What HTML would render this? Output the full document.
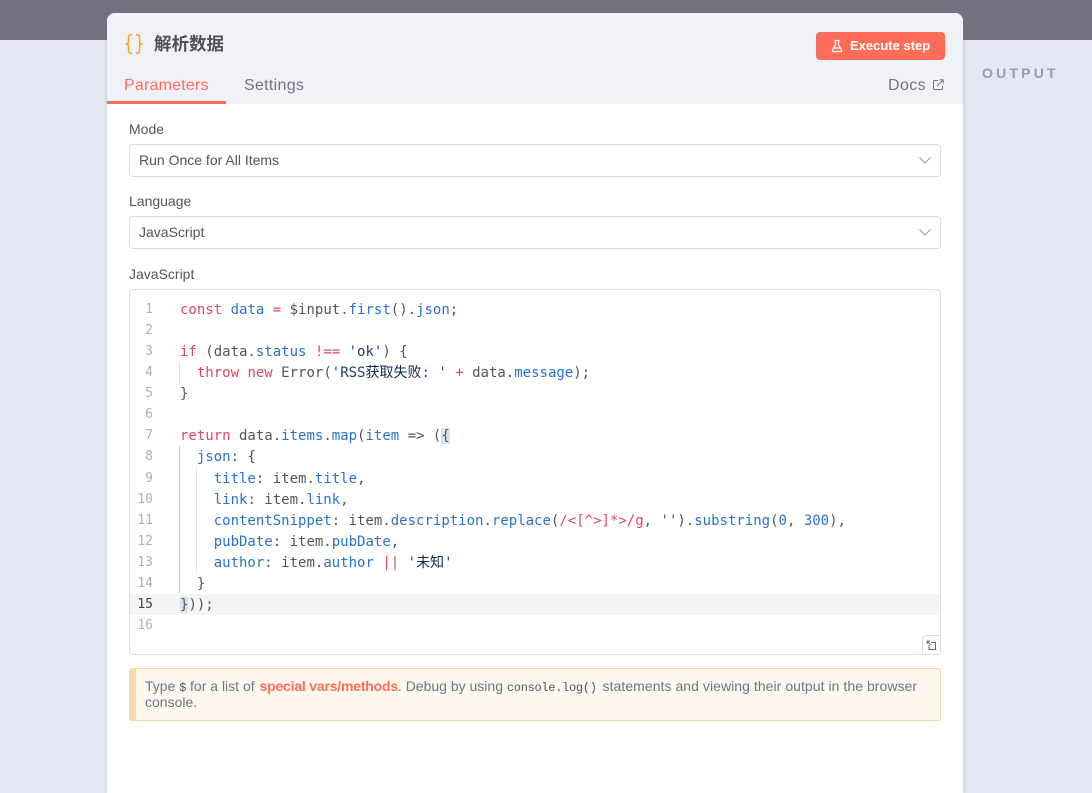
<!DOCTYPE html>
<html>
<head>
<meta charset="utf-8">
<style>
html,body{margin:0;padding:0;width:1092px;height:781px;overflow:hidden;background:#e5e8f2;font-family:"Liberation Sans","Noto Sans CJK SC",sans-serif;}
.a{position:absolute;white-space:nowrap;}
#top{left:0;top:0;width:1092px;height:40px;background:#73717e;}
#panel{left:107px;top:13px;width:856px;height:780px;background:#fff;border-radius:8px 8px 0 0;box-shadow:0 0 4px rgba(120,125,160,.4);overflow:hidden;}
#head{left:107px;top:13px;width:856px;height:91px;background:#f0f2f8;border-radius:8px 8px 0 0;}
.lbl{font-size:14px;color:#555;line-height:16px;}
.sel{left:129px;width:810px;height:31px;background:#fff;border:1px solid #d8dce8;border-radius:4px;}
.seltxt{left:139px;font-size:14px;color:#555;line-height:16px;}
#ed{left:129px;top:289px;width:810px;height:364px;background:#fff;border:1px solid #d8dce8;border-radius:4px;}
#act{left:130px;top:594px;width:810px;height:21px;background:#f5f5f5;}
.ln{left:130px;width:23px;margin-top:1px;text-align:right;font:13px/21px "DejaVu Sans Mono",monospace;color:#aeb1b6;}
.cd{left:180px;margin-top:1px;font:14px/21px "DejaVu Sans Mono","WenQuanYi Zen Hei",monospace;color:#555;white-space:pre;}
.k{color:#dc4a5f}.b{color:#2a72c8}.s{color:#1f3f6e}.cj{color:#0b2a52}
.hl{background:#d6e3f2}
.g{width:1px;background:#dfe2ea;}
#note{left:129px;top:668px;width:812px;height:53px;box-sizing:border-box;background:#fdf7ed;border:1px solid #f6d9a5;border-left:7px solid #f5d9a9;border-radius:3px;}
.nt{font-size:14px;line-height:16px;color:#6f7686;}
.mono{font:12px/16px "Liberation Mono",monospace;color:#555;letter-spacing:-.3px;}
</style>
</head>
<body>
<div class="a" id="top"></div>
<div class="a" style="left:982px;top:65px;font-size:14px;line-height:17px;font-weight:700;letter-spacing:3.2px;color:#9b9ca5;">OUTPUT</div>
<div class="a" id="panel"></div>
<div class="a" id="head"></div>

<svg class="a" style="left:124px;top:33px" width="21" height="22" viewBox="0 0 21 22" fill="none" stroke="#ff9d24" stroke-width="1.4"><path d="M8 1.5C5.5 1.5 4.5 2.5 4.5 4.5V8.5C4.5 10 3.5 11 1.5 11C3.5 11 4.5 12 4.5 13.5V17.5C4.5 19.5 5.5 20.5 8 20.5"/><path d="M12 1.5C14.5 1.5 15.5 2.5 15.5 4.5V8.5C15.5 10 16.5 11 18.5 11C16.5 11 15.5 12 15.5 13.5V17.5C15.5 19.5 14.5 20.5 12 20.5"/></svg>
<div class="a" style="left:154px;top:34px;font-size:17.5px;line-height:21px;font-weight:700;color:#505050;font-family:'Liberation Sans','Noto Sans CJK SC',sans-serif;">解析数据</div>

<div class="a" style="left:816px;top:32px;width:129px;height:28px;background:#ff6d5a;border-radius:4px;"></div>
<svg class="a" style="left:830px;top:39px" width="14" height="14" viewBox="0 0 14 14" fill="none" stroke="#fff" stroke-width="1.2"><path d="M4.5 1.5h5M5.5 1.5v4L2.5 11c-.4.8 0 1.5 1 1.5h7c1 0 1.4-.7 1-1.5l-3-5.5v-4"/><path d="M4 9h6" /></svg>
<div class="a" style="left:850px;top:37px;font-size:13px;line-height:17px;font-weight:700;color:#fff;letter-spacing:0;">Execute step</div>

<div class="a" style="left:124px;top:76px;font-size:16px;line-height:19px;color:#ff6d5a;letter-spacing:.2px;">Parameters</div>
<div class="a" style="left:107px;top:101px;width:119px;height:3px;background:#ff6d5a;"></div>
<div class="a" style="left:244px;top:76px;font-size:16px;line-height:19px;color:#74747e;letter-spacing:.3px;">Settings</div>
<div class="a" style="left:888px;top:76px;font-size:16px;line-height:19px;color:#74747e;letter-spacing:.4px;">Docs</div>
<svg class="a" style="left:932px;top:79px" width="12" height="12" viewBox="0 0 12 12" fill="none" stroke="#74747e" stroke-width="1"><path d="M6 1.5H2.5a1 1 0 0 0-1 1v7a1 1 0 0 0 1 1h7a1 1 0 0 0 1-1V7"/><path d="M5 7L11 1M7.5 .8H11.2V4.5"/></svg>

<div class="a lbl" style="left:129px;top:121px;">Mode</div>
<div class="a sel" style="top:144px;"></div>
<div class="a seltxt" style="top:152px;">Run Once for All Items</div>
<svg class="a" style="left:918px;top:156px" width="14" height="9" viewBox="0 0 14 9" fill="none" stroke="#9a9ca6" stroke-width="1"><path d="M1.5 1.5L7 7l5.5-5.5"/></svg>

<div class="a lbl" style="left:129px;top:193px;">Language</div>
<div class="a sel" style="top:216px;"></div>
<div class="a seltxt" style="top:224px;">JavaScript</div>
<svg class="a" style="left:918px;top:228px" width="14" height="9" viewBox="0 0 14 9" fill="none" stroke="#9a9ca6" stroke-width="1"><path d="M1.5 1.5L7 7l5.5-5.5"/></svg>

<div class="a lbl" style="left:129px;top:266px;">JavaScript</div>
<div class="a" id="ed"></div>
<div class="a" id="act"></div>

<div class="a g" style="left:179px;top:362px;height:21px;"></div>
<div class="a g" style="left:179px;top:446px;height:147px;background:#c4c9d8;"></div>
<div class="a g" style="left:196px;top:467px;height:105px;"></div>

<div class="a ln" style="top:298px;">1</div>
<div class="a ln" style="top:319px;">2</div>
<div class="a ln" style="top:340px;">3</div>
<div class="a ln" style="top:361px;">4</div>
<div class="a ln" style="top:382px;">5</div>
<div class="a ln" style="top:403px;">6</div>
<div class="a ln" style="top:424px;">7</div>
<div class="a ln" style="top:445px;">8</div>
<div class="a ln" style="top:467px;">9</div>
<div class="a ln" style="top:488px;">10</div>
<div class="a ln" style="top:509px;">11</div>
<div class="a ln" style="top:530px;">12</div>
<div class="a ln" style="top:551px;">13</div>
<div class="a ln" style="top:572px;">14</div>
<div class="a ln" style="top:593px;color:#444;">15</div>
<div class="a ln" style="top:614px;">16</div>

<div class="a cd" style="top:299px;"><span class="k">const</span> <span class="b">data</span> <span class="k">=</span> $input.<span class="b">first</span>().<span class="b">json</span>;</div>
<div class="a cd" style="top:341px;"><span class="k">if</span> (data.<span class="b">status</span> <span class="k">!==</span> <span class="s">'ok'</span>) {</div>
<div class="a cd" style="top:362px;">  <span class="k">throw</span> <span class="k">new</span> Error(<span class="s">'RSS<span class="cj">获取失败</span>: '</span> <span class="k">+</span> data.<span class="b">message</span>);</div>
<div class="a cd" style="top:383px;">}</div>
<div class="a cd" style="top:425px;"><span class="k">return</span> data.<span class="b">items</span>.<span class="b">map</span>(<span class="b">item</span> =&gt; (<span class="hl">{</span></div>
<div class="a cd" style="top:446px;">  <span class="b">json</span>: {</div>
<div class="a cd" style="top:468px;">    <span class="b">title</span>: item.<span class="b">title</span>,</div>
<div class="a cd" style="top:489px;">    <span class="b">link</span>: item.<span class="b">link</span>,</div>
<div class="a cd" style="top:510px;">    <span class="b">contentSnippet</span>: item.<span class="b">description</span>.<span class="b">replace</span>(<span class="k">/&lt;[^&gt;]*&gt;/g</span>, <span class="s" style="color:#555">''</span>).<span class="b">substring</span>(<span class="b">0</span>, <span class="b">300</span>),</div>
<div class="a cd" style="top:531px;">    <span class="b">pubDate</span>: item.<span class="b">pubDate</span>,</div>
<div class="a cd" style="top:552px;">    <span class="b">author</span>: item.<span class="b">author</span> <span class="k">||</span> <span class="s">'<span class="cj">未知</span>'</span></div>
<div class="a cd" style="top:573px;">  }</div>
<div class="a cd" style="top:594px;"><span class="hl">}</span>));</div>

<div class="a" style="left:922px;top:635px;width:17px;height:18px;background:#fff;border-left:1px solid #d8dce8;border-top:1px solid #d8dce8;border-radius:4px 0 0 0;"></div>
<svg class="a" style="left:926px;top:640px" width="11" height="11" viewBox="0 0 11 11" fill="none" stroke="#666" stroke-width="1"><path d="M1 1l4 4M1 1h3M1 1v3"/><path d="M5 2.5h4.5v7H3V5"/></svg>

<div class="a" id="note"></div>
<div class="a nt" style="left:145px;top:678px;">Type <span class="mono">$</span> for a list of <b style="color:#ff6d5a;letter-spacing:-.2px;margin-left:1px">special vars/methods</b>. Debug by using <span class="mono">console.log()</span><span style="margin-left:2px;letter-spacing:.05px"> statements and viewing their output in the browser</span></div>
<div class="a nt" style="left:145px;top:694px;">console.</div>
</body>
</html>
